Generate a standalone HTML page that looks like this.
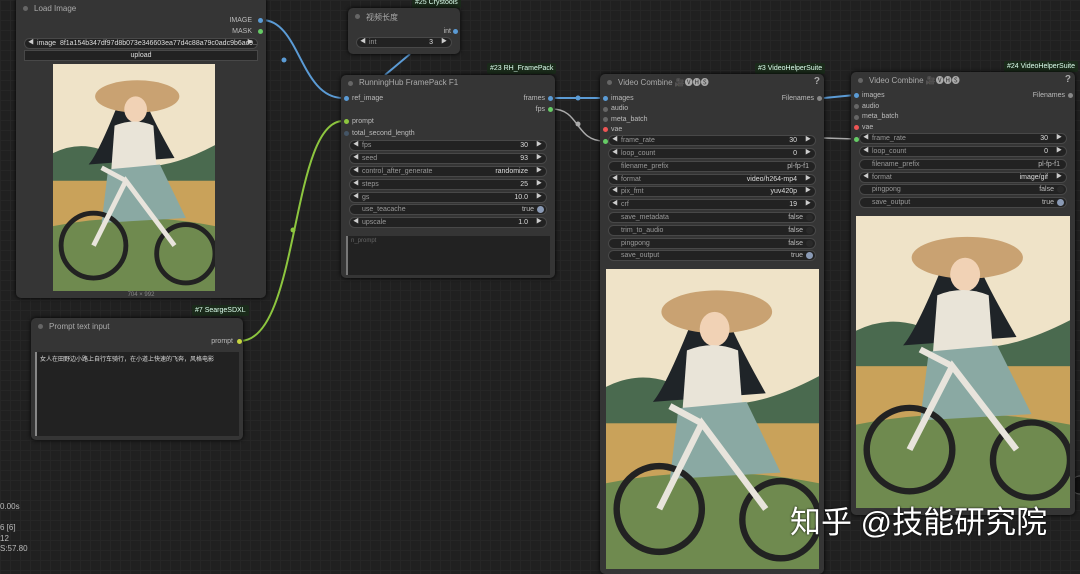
<!DOCTYPE html>
<html><head><meta charset="utf-8"><style>
*{margin:0;padding:0;box-sizing:border-box}
body{width:1080px;height:563px;overflow:hidden;background:#202020;font-family:"Liberation Sans","Noto Sans CJK SC",sans-serif;position:relative;
background-image:linear-gradient(#262626 1px,transparent 1px),linear-gradient(90deg,#262626 1px,transparent 1px);background-size:10px 10px}
.a{position:absolute}
.node{position:absolute;background:#353535;border-radius:5px;box-shadow:0 0 4px #000}
.title{position:absolute;left:0;right:0;top:0;height:16px;font-size:8px;color:#aaa;padding:4px 0 0 18px}
.title:before{content:"";position:absolute;left:7px;top:6px;width:5px;height:5px;border-radius:50%;background:#666}
.tag{position:absolute;background:#1a2a1a;color:#dfe;font-size:7px;padding:1px 3px;line-height:9px;border-radius:2px}
.w{position:absolute;height:11px;background:#222;border:1px solid #484848;border-radius:6px;font-size:7px;color:#999;line-height:9px;padding:0 14px 0 12px;white-space:nowrap;overflow:hidden}
.w:before{content:"◀";position:absolute;left:3px;color:#ccc;font-size:6px}
.w:after{content:"▶";position:absolute;right:4px;color:#ccc;font-size:6px}
.w b{position:absolute;right:18px;top:0;color:#ddd;font-weight:normal}
.w.t:before,.w.t:after{content:""}
.w.t b{right:12px;color:#bbb}
.w.t i{position:absolute;right:2px;top:1px;width:7px;height:7px;border-radius:50%;background:#2a2a2a}
.w.t i.on{background:#8a9ab5}
.io{position:absolute;font-size:7px;color:#bbb;line-height:9px}
.d{position:absolute;width:5px;height:5px;border-radius:50%}
.ta{position:absolute;background:#222;border-left:2px solid #888;font-size:6px;color:#ddd;padding:2px 3px}
</style></head><body>
<svg class="a" style="left:0;top:0" width="1080" height="563">
<path d="M262 20 C300 20,300 98,343 98" stroke="#5b9bd5" stroke-width="2" fill="none"/>
<circle cx="284" cy="60" r="2.5" fill="#5b9bd5"/>
<path d="M410 54 L385 75" stroke="#5b9bd5" stroke-width="2"/>
<path d="M240 341 C300 341,290 121,343 121" stroke="#8dc63f" stroke-width="2" fill="none"/>
<circle cx="293" cy="230" r="2.5" fill="#8dc63f"/>
<path d="M552 98 L604 98" stroke="#5b9bd5" stroke-width="2"/>
<circle cx="578" cy="98" r="2.5" fill="#5b9bd5"/>
<path d="M552 109 C580 109,575 141,604 141" stroke="#aaa" stroke-width="1.5" fill="none"/>
<circle cx="578" cy="124" r="2.5" fill="#aaa"/>
<path d="M824 98 L855 95" stroke="#5b9bd5" stroke-width="2"/>
<path d="M824 138 L855 139" stroke="#aaa" stroke-width="1.5"/>
<circle cx="1080" cy="485" r="9" fill="#111" stroke="#555"/>
</svg>
<svg width="0" height="0" style="position:absolute"><defs>
<symbol id="pic" viewBox="0 0 100 140" preserveAspectRatio="none">
<rect width="100" height="140" fill="#efe3c8"/>
<path d="M0 55 Q20 45 40 58 T100 50 V80 H0Z" fill="#4a6a4f"/>
<rect y="72" width="100" height="68" fill="#c9a25a"/>
<path d="M0 100 Q50 90 100 100 V140 H0Z" fill="#6f8a4f"/>
<path d="M40 25 Q28 55 22 62 L75 58 Q62 35 58 25Z" fill="#1f2428"/>
<ellipse cx="52" cy="20" rx="26" ry="10" fill="#c9a272"/>
<ellipse cx="51" cy="28" rx="7" ry="8" fill="#f1d2b5"/>
<path d="M38 38 Q50 33 62 38 L64 65 L36 65Z" fill="#e9e4d8"/>
<path d="M34 65 L66 62 L82 95 L30 98Z" fill="#8aa9a3"/>
<circle cx="25" cy="112" r="20" fill="none" stroke="#222" stroke-width="3"/>
<circle cx="82" cy="117" r="18" fill="none" stroke="#222" stroke-width="3"/>
<path d="M25 112 L45 72 L75 112 M45 72 L30 64" stroke="#e8e4dc" stroke-width="3" fill="none"/>
</symbol></defs></svg>

<div class="node" style="left:16px;top:-4px;width:250px;height:302px">
<div class="title" style="top:4px">Load Image</div>
<div class="io" style="right:14px;top:20px">IMAGE</div><div class="d" style="right:3px;top:22px;background:#5b9bd5"></div>
<div class="io" style="right:14px;top:31px">MASK</div><div class="d" style="right:3px;top:33px;background:#6c6"></div>
<div class="w" style="left:8px;top:42px;width:234px;color:#ddd;padding-right:16px">image&nbsp; 8f1a154b347df97d8b073e346603ea77d4c88a79c0adc9b6ac9...</div>
<div class="a" style="left:8px;top:54px;width:234px;height:11px;background:#222;border:1px solid #484848;font-size:7px;color:#ddd;text-align:center;line-height:9px">upload</div>
<svg class="a" style="left:37px;top:68px" width="162" height="227"><use href="#pic"/></svg>
<div class="io" style="left:0;right:0;top:295px;text-align:center;font-size:6px;color:#888">704 × 992</div>
</div>

<div class="tag" style="left:412px;top:-3px">#25 Crystools</div>
<div class="node" style="left:348px;top:8px;width:112px;height:46px">
<div class="title">视频长度</div>
<div class="io" style="right:9px;top:19px">int</div><div class="d" style="right:2px;top:21px;background:#5b9bd5"></div>
<div class="w" style="left:8px;top:29px;width:96px">int<b>3</b></div>
</div>

<div class="tag" style="left:487px;top:63px">#23 RH_FramePack</div>
<div class="node" style="left:341px;top:75px;width:214px;height:203px">
<div class="title" style="padding-top:3px">RunningHub FramePack F1</div>
<div class="d" style="left:3px;top:21px;background:#5b9bd5"></div><div class="io" style="left:11px;top:19px">ref_image</div>
<div class="io" style="right:10px;top:19px">frames</div><div class="d" style="right:2px;top:21px;background:#5b9bd5"></div>
<div class="io" style="right:10px;top:30px">fps</div><div class="d" style="right:2px;top:32px;background:#6c6"></div>
<div class="d" style="left:3px;top:44px;background:#8dc63f"></div><div class="io" style="left:11px;top:42px">prompt</div>
<div class="d" style="left:3px;top:56px;background:#456"></div><div class="io" style="left:11px;top:54px">total_second_length</div>
<div class="w" style="left:8px;top:65px;width:198px">fps<b>30</b></div>
<div class="w" style="left:8px;top:78px;width:198px">seed<b>93</b></div>
<div class="w" style="left:8px;top:91px;width:198px">control_after_generate<b>randomize</b></div>
<div class="w" style="left:8px;top:104px;width:198px">steps<b>25</b></div>
<div class="w" style="left:8px;top:117px;width:198px">gs<b>10.0</b></div>
<div class="w t" style="left:8px;top:129px;width:198px">use_teacache<b>true</b><i class="on"></i></div>
<div class="w" style="left:8px;top:142px;width:198px">upscale<b>1.0</b></div>
<div class="ta" style="left:5px;top:161px;width:204px;height:39px;color:#666;border-left-color:#777">n_prompt</div>
</div>

<div class="tag" style="left:192px;top:305px">#7 SeargeSDXL</div>
<div class="node" style="left:31px;top:318px;width:212px;height:122px">
<div class="title" style="padding-top:4px">Prompt text input</div>
<div class="io" style="right:10px;top:19px">prompt</div><div class="d" style="right:1px;top:21px;background:#c8d640"></div>
<div class="ta" style="left:4px;top:34px;width:204px;height:84px">女人在田野边小路上自行车骑行，在小道上快速的飞奔，风格电影</div>
</div>

<div class="tag" style="left:755px;top:63px">#3 VideoHelperSuite</div>
<div class="node" style="left:600px;top:74px;width:224px;height:500px">
<div class="title" style="padding-top:3px">Video Combine 🎥🅥🅗🅢</div>
<div class="a" style="right:4px;top:2px;color:#aaa;font-size:10px;font-weight:bold">?</div>
<div class="d" style="left:3px;top:22px;background:#5b9bd5"></div><div class="io" style="left:11px;top:20px">images</div>
<div class="io" style="right:10px;top:20px">Filenames</div><div class="d" style="right:2px;top:22px;background:#888"></div>
<div class="d" style="left:3px;top:33px;background:#666"></div><div class="io" style="left:11px;top:30px">audio</div>
<div class="d" style="left:3px;top:43px;background:#666"></div><div class="io" style="left:11px;top:41px">meta_batch</div>
<div class="d" style="left:3px;top:53px;background:#e55"></div><div class="io" style="left:11px;top:51px">vae</div>
<div class="d" style="left:3px;top:65px;background:#6c6"></div>
<div class="w" style="left:8px;top:61px;width:208px">frame_rate<b>30</b></div>
<div class="w" style="left:8px;top:74px;width:208px">loop_count<b>0</b></div>
<div class="w t" style="left:8px;top:87px;width:208px">filename_prefix<b style="right:6px">pl-fp-f1</b></div>
<div class="w" style="left:8px;top:100px;width:208px">format<b>video/h264-mp4</b></div>
<div class="w" style="left:8px;top:112px;width:208px">pix_fmt<b>yuv420p</b></div>
<div class="w" style="left:8px;top:125px;width:208px">crf<b>19</b></div>
<div class="w t" style="left:8px;top:138px;width:208px">save_metadata<b>false</b><i></i></div>
<div class="w t" style="left:8px;top:151px;width:208px">trim_to_audio<b>false</b><i></i></div>
<div class="w t" style="left:8px;top:164px;width:208px">pingpong<b>false</b><i></i></div>
<div class="w t" style="left:8px;top:176px;width:208px">save_output<b>true</b><i class="on"></i></div>
<svg class="a" style="left:6px;top:195px" width="213" height="300"><use href="#pic"/></svg>
</div>

<div class="tag" style="left:1004px;top:61px">#24 VideoHelperSuite</div>
<div class="node" style="left:851px;top:72px;width:224px;height:443px">
<div class="title" style="padding-top:3px">Video Combine 🎥🅥🅗🅢</div>
<div class="a" style="right:4px;top:2px;color:#aaa;font-size:10px;font-weight:bold">?</div>
<div class="d" style="left:3px;top:21px;background:#5b9bd5"></div><div class="io" style="left:11px;top:19px">images</div>
<div class="io" style="right:10px;top:19px">Filenames</div><div class="d" style="right:2px;top:21px;background:#888"></div>
<div class="d" style="left:3px;top:32px;background:#666"></div><div class="io" style="left:11px;top:30px">audio</div>
<div class="d" style="left:3px;top:43px;background:#666"></div><div class="io" style="left:11px;top:40px">meta_batch</div>
<div class="d" style="left:3px;top:53px;background:#e55"></div><div class="io" style="left:11px;top:51px">vae</div>
<div class="d" style="left:3px;top:65px;background:#6c6"></div>
<div class="w" style="left:8px;top:61px;width:208px">frame_rate<b>30</b></div>
<div class="w" style="left:8px;top:74px;width:208px">loop_count<b>0</b></div>
<div class="w t" style="left:8px;top:87px;width:208px">filename_prefix<b style="right:6px">pl-fp-f1</b></div>
<div class="w" style="left:8px;top:100px;width:208px">format<b>image/gif</b></div>
<div class="w t" style="left:8px;top:112px;width:208px">pingpong<b>false</b><i></i></div>
<div class="w t" style="left:8px;top:125px;width:208px">save_output<b>true</b><i class="on"></i></div>
<svg class="a" style="left:5px;top:144px" width="214" height="292"><use href="#pic"/></svg>
</div>

<div class="a" style="left:0;top:502px;font-size:8px;color:#bbb;line-height:10.5px">0.00s<br>&nbsp;<br>6 [6]<br>12<br>S:57.80</div>
<div class="a" style="left:790px;top:497px;font-size:31px;color:#fff;text-shadow:0 0 2px #000;white-space:nowrap">知乎 @技能研究院</div>
</body></html>
